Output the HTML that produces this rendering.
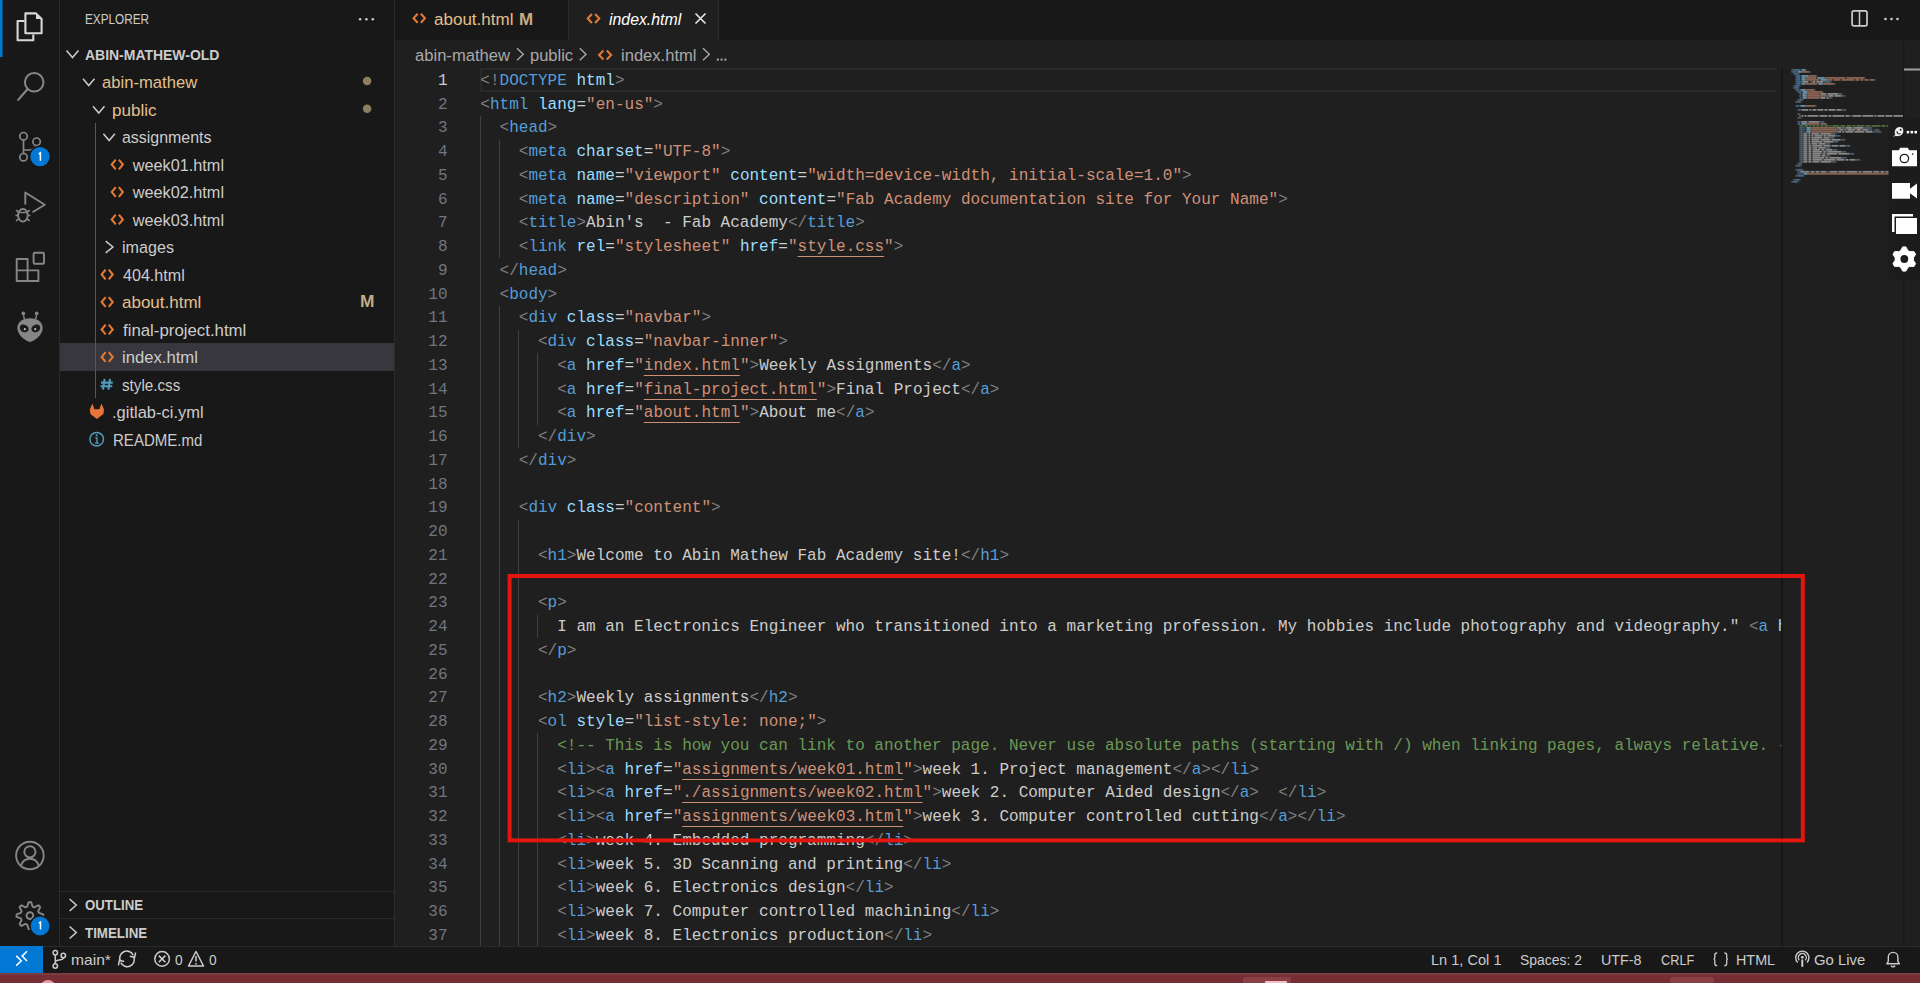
<!DOCTYPE html>
<html><head><meta charset="utf-8">
<style>
*{box-sizing:border-box}
html,body{margin:0;padding:0}
body{width:1920px;height:983px;overflow:hidden;background:#181818;position:relative;font-family:"Liberation Sans",sans-serif;color:#cccccc}
.abs{position:absolute}
#act{position:absolute;left:0;top:0;width:60px;height:946px;background:#181818;border-right:1px solid #2b2b2b}
#side{position:absolute;left:60px;top:0;width:335px;height:946px;background:#181818;border-right:1px solid #2b2b2b}
#tabs{position:absolute;left:395px;top:0;width:1525px;height:40.5px;background:#181818;border-bottom:1px solid #202020}
#editor{position:absolute;left:395px;top:41px;width:1525px;height:905px;background:#1f1f1f}
#status{position:absolute;left:0;top:946px;width:1920px;height:27.5px;background:#181818;border-top:1px solid #2b2b2b}
#task{position:absolute;left:0;top:973.4px;width:1920px;height:10px;background:#772d34}
.code{position:absolute;left:0;top:0;width:1782px;height:946px;overflow:hidden}
.ln{position:absolute;left:480.3px;transform:translateY(0px);height:23.75px;line-height:23.75px;white-space:pre;font-family:"Liberation Mono",monospace;font-size:16.03px;color:#cccccc}
.num{position:absolute;transform:translateY(0px);left:400px;width:47.5px;text-align:right;height:23.75px;line-height:23.75px;font-family:"Liberation Mono",monospace;font-size:16.03px;color:#6e7681}
.num.act{color:#cccccc}
.p{color:#808080}.t{color:#569cd6}.a{color:#9cdcfe}.s{color:#ce9178}.x{color:#cccccc}.c{color:#6a9955}
.s u{text-decoration:underline;text-decoration-color:#ce9178;text-underline-offset:4.5px;text-decoration-thickness:1px}
.guide{position:absolute;width:1px;background:#404040}
.ui{position:absolute;white-space:pre;font-size:16.25px;line-height:20px;transform-origin:0 50%}
</style></head><body>
<div id="act"></div>
<div id="side"></div>
<div id="tabs"></div>
<div id="editor"></div>
<div class="code">
<div class="abs" style="left:480px;top:68px;width:1297px;height:23.75px;border:2px solid #282828;border-right:none"></div>
<div class="num act" style="top:70.00px">1</div>
<div class="num" style="top:94.00px">2</div>
<div class="num" style="top:117.00px">3</div>
<div class="num" style="top:141.00px">4</div>
<div class="num" style="top:165.00px">5</div>
<div class="num" style="top:189.00px">6</div>
<div class="num" style="top:212.00px">7</div>
<div class="num" style="top:236.00px">8</div>
<div class="num" style="top:260.00px">9</div>
<div class="num" style="top:284.00px">10</div>
<div class="num" style="top:307.00px">11</div>
<div class="num" style="top:331.00px">12</div>
<div class="num" style="top:355.00px">13</div>
<div class="num" style="top:379.00px">14</div>
<div class="num" style="top:402.00px">15</div>
<div class="num" style="top:426.00px">16</div>
<div class="num" style="top:450.00px">17</div>
<div class="num" style="top:474.00px">18</div>
<div class="num" style="top:497.00px">19</div>
<div class="num" style="top:521.00px">20</div>
<div class="num" style="top:545.00px">21</div>
<div class="num" style="top:569.00px">22</div>
<div class="num" style="top:592.00px">23</div>
<div class="num" style="top:616.00px">24</div>
<div class="num" style="top:640.00px">25</div>
<div class="num" style="top:664.00px">26</div>
<div class="num" style="top:687.00px">27</div>
<div class="num" style="top:711.00px">28</div>
<div class="num" style="top:735.00px">29</div>
<div class="num" style="top:759.00px">30</div>
<div class="num" style="top:782.00px">31</div>
<div class="num" style="top:806.00px">32</div>
<div class="num" style="top:830.00px">33</div>
<div class="num" style="top:854.00px">34</div>
<div class="num" style="top:877.00px">35</div>
<div class="num" style="top:901.00px">36</div>
<div class="num" style="top:925.00px">37</div>
<div class="guide" style="left:479.7px;top:115.75px;height:831.25px"></div>
<div class="guide" style="left:498.9px;top:139.50px;height:118.75px"></div>
<div class="guide" style="left:498.9px;top:305.75px;height:641.25px"></div>
<div class="guide" style="left:518.2px;top:329.50px;height:118.75px"></div>
<div class="guide" style="left:518.2px;top:519.50px;height:427.50px"></div>
<div class="guide" style="left:537.4px;top:353.25px;height:71.25px"></div>
<div class="guide" style="left:537.4px;top:614.50px;height:23.75px"></div>
<div class="guide" style="left:537.4px;top:733.25px;height:213.75px"></div>
<div class="ln" style="top:70.00px"><span class="p">&lt;!</span><span class="t">DOCTYPE</span><span class="x"> </span><span class="a">html</span><span class="p">&gt;</span></div>
<div class="ln" style="top:94.00px"><span class="p">&lt;</span><span class="t">html</span><span class="x"> </span><span class="a">lang</span><span class="x">=</span><span class="s">&quot;en-us&quot;</span><span class="p">&gt;</span></div>
<div class="ln" style="top:117.00px"><span class="x">  </span><span class="p">&lt;</span><span class="t">head</span><span class="p">&gt;</span></div>
<div class="ln" style="top:141.00px"><span class="x">    </span><span class="p">&lt;</span><span class="t">meta</span><span class="x"> </span><span class="a">charset</span><span class="x">=</span><span class="s">&quot;UTF-8&quot;</span><span class="p">&gt;</span></div>
<div class="ln" style="top:165.00px"><span class="x">    </span><span class="p">&lt;</span><span class="t">meta</span><span class="x"> </span><span class="a">name</span><span class="x">=</span><span class="s">&quot;viewport&quot;</span><span class="x"> </span><span class="a">content</span><span class="x">=</span><span class="s">&quot;width=device-width, initial-scale=1.0&quot;</span><span class="p">&gt;</span></div>
<div class="ln" style="top:189.00px"><span class="x">    </span><span class="p">&lt;</span><span class="t">meta</span><span class="x"> </span><span class="a">name</span><span class="x">=</span><span class="s">&quot;description&quot;</span><span class="x"> </span><span class="a">content</span><span class="x">=</span><span class="s">&quot;Fab Academy documentation site for Your Name&quot;</span><span class="p">&gt;</span></div>
<div class="ln" style="top:212.00px"><span class="x">    </span><span class="p">&lt;</span><span class="t">title</span><span class="p">&gt;</span><span class="x">Abin&#x27;s  - Fab Academy</span><span class="p">&lt;/</span><span class="t">title</span><span class="p">&gt;</span></div>
<div class="ln" style="top:236.00px"><span class="x">    </span><span class="p">&lt;</span><span class="t">link</span><span class="x"> </span><span class="a">rel</span><span class="x">=</span><span class="s">&quot;stylesheet&quot;</span><span class="x"> </span><span class="a">href</span><span class="x">=</span><span class="s">"<u>style.css</u>"</span><span class="p">&gt;</span></div>
<div class="ln" style="top:260.00px"><span class="x">  </span><span class="p">&lt;/</span><span class="t">head</span><span class="p">&gt;</span></div>
<div class="ln" style="top:284.00px"><span class="x">  </span><span class="p">&lt;</span><span class="t">body</span><span class="p">&gt;</span></div>
<div class="ln" style="top:307.00px"><span class="x">    </span><span class="p">&lt;</span><span class="t">div</span><span class="x"> </span><span class="a">class</span><span class="x">=</span><span class="s">&quot;navbar&quot;</span><span class="p">&gt;</span></div>
<div class="ln" style="top:331.00px"><span class="x">      </span><span class="p">&lt;</span><span class="t">div</span><span class="x"> </span><span class="a">class</span><span class="x">=</span><span class="s">&quot;navbar-inner&quot;</span><span class="p">&gt;</span></div>
<div class="ln" style="top:355.00px"><span class="x">        </span><span class="p">&lt;</span><span class="t">a</span><span class="x"> </span><span class="a">href</span><span class="x">=</span><span class="s">"<u>index.html</u>"</span><span class="p">&gt;</span><span class="x">Weekly Assignments</span><span class="p">&lt;/</span><span class="t">a</span><span class="p">&gt;</span></div>
<div class="ln" style="top:379.00px"><span class="x">        </span><span class="p">&lt;</span><span class="t">a</span><span class="x"> </span><span class="a">href</span><span class="x">=</span><span class="s">"<u>final-project.html</u>"</span><span class="p">&gt;</span><span class="x">Final Project</span><span class="p">&lt;/</span><span class="t">a</span><span class="p">&gt;</span></div>
<div class="ln" style="top:402.00px"><span class="x">        </span><span class="p">&lt;</span><span class="t">a</span><span class="x"> </span><span class="a">href</span><span class="x">=</span><span class="s">"<u>about.html</u>"</span><span class="p">&gt;</span><span class="x">About me</span><span class="p">&lt;/</span><span class="t">a</span><span class="p">&gt;</span></div>
<div class="ln" style="top:426.00px"><span class="x">      </span><span class="p">&lt;/</span><span class="t">div</span><span class="p">&gt;</span></div>
<div class="ln" style="top:450.00px"><span class="x">    </span><span class="p">&lt;/</span><span class="t">div</span><span class="p">&gt;</span></div>
<div class="ln" style="top:474.00px"></div>
<div class="ln" style="top:497.00px"><span class="x">    </span><span class="p">&lt;</span><span class="t">div</span><span class="x"> </span><span class="a">class</span><span class="x">=</span><span class="s">&quot;content&quot;</span><span class="p">&gt;</span></div>
<div class="ln" style="top:521.00px"></div>
<div class="ln" style="top:545.00px"><span class="x">      </span><span class="p">&lt;</span><span class="t">h1</span><span class="p">&gt;</span><span class="x">Welcome to Abin Mathew Fab Academy site!</span><span class="p">&lt;/</span><span class="t">h1</span><span class="p">&gt;</span></div>
<div class="ln" style="top:569.00px"></div>
<div class="ln" style="top:592.00px"><span class="x">      </span><span class="p">&lt;</span><span class="t">p</span><span class="p">&gt;</span></div>
<div class="ln" style="top:616.00px"><span class="x">        I am an Electronics Engineer who transitioned into a marketing profession. My hobbies include photography and videography.&quot; </span><span class="p">&lt;</span><span class="t">a</span><span class="x"> </span><span class="a">href</span><span class="x">=</span><span class="s">&quot;#&quot;</span><span class="p">&gt;</span></div>
<div class="ln" style="top:640.00px"><span class="x">      </span><span class="p">&lt;/</span><span class="t">p</span><span class="p">&gt;</span></div>
<div class="ln" style="top:664.00px"></div>
<div class="ln" style="top:687.00px"><span class="x">      </span><span class="p">&lt;</span><span class="t">h2</span><span class="p">&gt;</span><span class="x">Weekly assignments</span><span class="p">&lt;/</span><span class="t">h2</span><span class="p">&gt;</span></div>
<div class="ln" style="top:711.00px"><span class="x">      </span><span class="p">&lt;</span><span class="t">ol</span><span class="x"> </span><span class="a">style</span><span class="x">=</span><span class="s">&quot;list-style: none;&quot;</span><span class="p">&gt;</span></div>
<div class="ln" style="top:735.00px"><span class="x">        </span><span class="c">&lt;!-- This is how you can link to another page. Never use absolute paths (starting with /) when linking pages, always relative. --&gt;</span></div>
<div class="ln" style="top:759.00px"><span class="x">        </span><span class="p">&lt;</span><span class="t">li</span><span class="p">&gt;</span><span class="p">&lt;</span><span class="t">a</span><span class="x"> </span><span class="a">href</span><span class="x">=</span><span class="s">"<u>assignments/week01.html</u>"</span><span class="p">&gt;</span><span class="x">week 1. Project management</span><span class="p">&lt;/</span><span class="t">a</span><span class="p">&gt;</span><span class="p">&lt;/</span><span class="t">li</span><span class="p">&gt;</span></div>
<div class="ln" style="top:782.00px"><span class="x">        </span><span class="p">&lt;</span><span class="t">li</span><span class="p">&gt;</span><span class="p">&lt;</span><span class="t">a</span><span class="x"> </span><span class="a">href</span><span class="x">=</span><span class="s">"<u>./assignments/week02.html</u>"</span><span class="p">&gt;</span><span class="x">week 2. Computer Aided design</span><span class="p">&lt;/</span><span class="t">a</span><span class="p">&gt;</span><span class="x">  </span><span class="p">&lt;/</span><span class="t">li</span><span class="p">&gt;</span></div>
<div class="ln" style="top:806.00px"><span class="x">        </span><span class="p">&lt;</span><span class="t">li</span><span class="p">&gt;</span><span class="p">&lt;</span><span class="t">a</span><span class="x"> </span><span class="a">href</span><span class="x">=</span><span class="s">"<u>assignments/week03.html</u>"</span><span class="p">&gt;</span><span class="x">week 3. Computer controlled cutting</span><span class="p">&lt;/</span><span class="t">a</span><span class="p">&gt;</span><span class="p">&lt;/</span><span class="t">li</span><span class="p">&gt;</span></div>
<div class="ln" style="top:830.00px"><span class="x">        </span><span class="p">&lt;</span><span class="t">li</span><span class="p">&gt;</span><span class="x">week 4. Embedded programming</span><span class="p">&lt;/</span><span class="t">li</span><span class="p">&gt;</span></div>
<div class="ln" style="top:854.00px"><span class="x">        </span><span class="p">&lt;</span><span class="t">li</span><span class="p">&gt;</span><span class="x">week 5. 3D Scanning and printing</span><span class="p">&lt;/</span><span class="t">li</span><span class="p">&gt;</span></div>
<div class="ln" style="top:877.00px"><span class="x">        </span><span class="p">&lt;</span><span class="t">li</span><span class="p">&gt;</span><span class="x">week 6. Electronics design</span><span class="p">&lt;/</span><span class="t">li</span><span class="p">&gt;</span></div>
<div class="ln" style="top:901.00px"><span class="x">        </span><span class="p">&lt;</span><span class="t">li</span><span class="p">&gt;</span><span class="x">week 7. Computer controlled machining</span><span class="p">&lt;/</span><span class="t">li</span><span class="p">&gt;</span></div>
<div class="ln" style="top:925.00px"><span class="x">        </span><span class="p">&lt;</span><span class="t">li</span><span class="p">&gt;</span><span class="x">week 8. Electronics production</span><span class="p">&lt;/</span><span class="t">li</span><span class="p">&gt;</span></div>
</div>
<div id="status"></div>
<div id="task"></div>
<svg class="abs" style="left:0;top:0" width="1920" height="983"><g opacity="0.6"><rect x="1791.4" y="69.0" width="2.0" height="1.8" fill="#808080"/><rect x="1793.4" y="69.0" width="7.0" height="1.8" fill="#569cd6"/><rect x="1801.4" y="69.0" width="4.0" height="1.8" fill="#9cdcfe"/><rect x="1805.4" y="69.0" width="1.0" height="1.8" fill="#808080"/><rect x="1791.4" y="71.0" width="1.0" height="1.8" fill="#808080"/><rect x="1792.4" y="71.0" width="4.0" height="1.8" fill="#569cd6"/><rect x="1797.4" y="71.0" width="4.0" height="1.8" fill="#9cdcfe"/><rect x="1801.4" y="71.0" width="1.0" height="1.8" fill="#cccccc"/><rect x="1802.4" y="71.0" width="7.0" height="1.8" fill="#ce9178"/><rect x="1809.4" y="71.0" width="1.0" height="1.8" fill="#808080"/><rect x="1793.4" y="73.0" width="1.0" height="1.8" fill="#808080"/><rect x="1794.4" y="73.0" width="4.0" height="1.8" fill="#569cd6"/><rect x="1798.4" y="73.0" width="1.0" height="1.8" fill="#808080"/><rect x="1795.4" y="75.0" width="1.0" height="1.8" fill="#808080"/><rect x="1796.4" y="75.0" width="4.0" height="1.8" fill="#569cd6"/><rect x="1801.4" y="75.0" width="7.0" height="1.8" fill="#9cdcfe"/><rect x="1808.4" y="75.0" width="1.0" height="1.8" fill="#cccccc"/><rect x="1809.4" y="75.0" width="7.0" height="1.8" fill="#ce9178"/><rect x="1816.4" y="75.0" width="1.0" height="1.8" fill="#808080"/><rect x="1795.4" y="77.0" width="1.0" height="1.8" fill="#808080"/><rect x="1796.4" y="77.0" width="4.0" height="1.8" fill="#569cd6"/><rect x="1801.4" y="77.0" width="4.0" height="1.8" fill="#9cdcfe"/><rect x="1805.4" y="77.0" width="1.0" height="1.8" fill="#cccccc"/><rect x="1806.4" y="77.0" width="10.0" height="1.8" fill="#ce9178"/><rect x="1817.4" y="77.0" width="7.0" height="1.8" fill="#9cdcfe"/><rect x="1824.4" y="77.0" width="1.0" height="1.8" fill="#cccccc"/><rect x="1825.4" y="77.0" width="20.0" height="1.8" fill="#ce9178"/><rect x="1846.4" y="77.0" width="18.0" height="1.8" fill="#ce9178"/><rect x="1864.4" y="77.0" width="1.0" height="1.8" fill="#808080"/><rect x="1795.4" y="79.0" width="1.0" height="1.8" fill="#808080"/><rect x="1796.4" y="79.0" width="4.0" height="1.8" fill="#569cd6"/><rect x="1801.4" y="79.0" width="4.0" height="1.8" fill="#9cdcfe"/><rect x="1805.4" y="79.0" width="1.0" height="1.8" fill="#cccccc"/><rect x="1806.4" y="79.0" width="13.0" height="1.8" fill="#ce9178"/><rect x="1820.4" y="79.0" width="7.0" height="1.8" fill="#9cdcfe"/><rect x="1827.4" y="79.0" width="1.0" height="1.8" fill="#cccccc"/><rect x="1828.4" y="79.0" width="4.0" height="1.8" fill="#ce9178"/><rect x="1833.4" y="79.0" width="7.0" height="1.8" fill="#ce9178"/><rect x="1841.4" y="79.0" width="13.0" height="1.8" fill="#ce9178"/><rect x="1855.4" y="79.0" width="4.0" height="1.8" fill="#ce9178"/><rect x="1860.4" y="79.0" width="3.0" height="1.8" fill="#ce9178"/><rect x="1864.4" y="79.0" width="4.0" height="1.8" fill="#ce9178"/><rect x="1869.4" y="79.0" width="5.0" height="1.8" fill="#ce9178"/><rect x="1874.4" y="79.0" width="1.0" height="1.8" fill="#808080"/><rect x="1795.4" y="81.0" width="1.0" height="1.8" fill="#808080"/><rect x="1796.4" y="81.0" width="5.0" height="1.8" fill="#569cd6"/><rect x="1801.4" y="81.0" width="1.0" height="1.8" fill="#808080"/><rect x="1802.4" y="81.0" width="6.0" height="1.8" fill="#cccccc"/><rect x="1810.4" y="81.0" width="1.0" height="1.8" fill="#cccccc"/><rect x="1812.4" y="81.0" width="3.0" height="1.8" fill="#cccccc"/><rect x="1816.4" y="81.0" width="7.0" height="1.8" fill="#cccccc"/><rect x="1823.4" y="81.0" width="2.0" height="1.8" fill="#808080"/><rect x="1825.4" y="81.0" width="5.0" height="1.8" fill="#569cd6"/><rect x="1830.4" y="81.0" width="1.0" height="1.8" fill="#808080"/><rect x="1795.4" y="83.0" width="1.0" height="1.8" fill="#808080"/><rect x="1796.4" y="83.0" width="4.0" height="1.8" fill="#569cd6"/><rect x="1801.4" y="83.0" width="3.0" height="1.8" fill="#9cdcfe"/><rect x="1804.4" y="83.0" width="1.0" height="1.8" fill="#cccccc"/><rect x="1805.4" y="83.0" width="12.0" height="1.8" fill="#ce9178"/><rect x="1818.4" y="83.0" width="4.0" height="1.8" fill="#9cdcfe"/><rect x="1822.4" y="83.0" width="1.0" height="1.8" fill="#cccccc"/><rect x="1823.4" y="83.0" width="11.0" height="1.8" fill="#ce9178"/><rect x="1834.4" y="83.0" width="1.0" height="1.8" fill="#808080"/><rect x="1793.4" y="85.0" width="2.0" height="1.8" fill="#808080"/><rect x="1795.4" y="85.0" width="4.0" height="1.8" fill="#569cd6"/><rect x="1799.4" y="85.0" width="1.0" height="1.8" fill="#808080"/><rect x="1793.4" y="87.0" width="1.0" height="1.8" fill="#808080"/><rect x="1794.4" y="87.0" width="4.0" height="1.8" fill="#569cd6"/><rect x="1798.4" y="87.0" width="1.0" height="1.8" fill="#808080"/><rect x="1795.4" y="89.0" width="1.0" height="1.8" fill="#808080"/><rect x="1796.4" y="89.0" width="3.0" height="1.8" fill="#569cd6"/><rect x="1800.4" y="89.0" width="5.0" height="1.8" fill="#9cdcfe"/><rect x="1805.4" y="89.0" width="1.0" height="1.8" fill="#cccccc"/><rect x="1806.4" y="89.0" width="8.0" height="1.8" fill="#ce9178"/><rect x="1814.4" y="89.0" width="1.0" height="1.8" fill="#808080"/><rect x="1797.4" y="91.0" width="1.0" height="1.8" fill="#808080"/><rect x="1798.4" y="91.0" width="3.0" height="1.8" fill="#569cd6"/><rect x="1802.4" y="91.0" width="5.0" height="1.8" fill="#9cdcfe"/><rect x="1807.4" y="91.0" width="1.0" height="1.8" fill="#cccccc"/><rect x="1808.4" y="91.0" width="14.0" height="1.8" fill="#ce9178"/><rect x="1822.4" y="91.0" width="1.0" height="1.8" fill="#808080"/><rect x="1799.4" y="93.0" width="1.0" height="1.8" fill="#808080"/><rect x="1800.4" y="93.0" width="1.0" height="1.8" fill="#569cd6"/><rect x="1802.4" y="93.0" width="4.0" height="1.8" fill="#9cdcfe"/><rect x="1806.4" y="93.0" width="1.0" height="1.8" fill="#cccccc"/><rect x="1807.4" y="93.0" width="12.0" height="1.8" fill="#ce9178"/><rect x="1819.4" y="93.0" width="1.0" height="1.8" fill="#808080"/><rect x="1820.4" y="93.0" width="6.0" height="1.8" fill="#cccccc"/><rect x="1827.4" y="93.0" width="11.0" height="1.8" fill="#cccccc"/><rect x="1838.4" y="93.0" width="2.0" height="1.8" fill="#808080"/><rect x="1840.4" y="93.0" width="1.0" height="1.8" fill="#569cd6"/><rect x="1841.4" y="93.0" width="1.0" height="1.8" fill="#808080"/><rect x="1799.4" y="95.0" width="1.0" height="1.8" fill="#808080"/><rect x="1800.4" y="95.0" width="1.0" height="1.8" fill="#569cd6"/><rect x="1802.4" y="95.0" width="4.0" height="1.8" fill="#9cdcfe"/><rect x="1806.4" y="95.0" width="1.0" height="1.8" fill="#cccccc"/><rect x="1807.4" y="95.0" width="20.0" height="1.8" fill="#ce9178"/><rect x="1827.4" y="95.0" width="1.0" height="1.8" fill="#808080"/><rect x="1828.4" y="95.0" width="5.0" height="1.8" fill="#cccccc"/><rect x="1834.4" y="95.0" width="7.0" height="1.8" fill="#cccccc"/><rect x="1841.4" y="95.0" width="2.0" height="1.8" fill="#808080"/><rect x="1843.4" y="95.0" width="1.0" height="1.8" fill="#569cd6"/><rect x="1844.4" y="95.0" width="1.0" height="1.8" fill="#808080"/><rect x="1799.4" y="97.0" width="1.0" height="1.8" fill="#808080"/><rect x="1800.4" y="97.0" width="1.0" height="1.8" fill="#569cd6"/><rect x="1802.4" y="97.0" width="4.0" height="1.8" fill="#9cdcfe"/><rect x="1806.4" y="97.0" width="1.0" height="1.8" fill="#cccccc"/><rect x="1807.4" y="97.0" width="12.0" height="1.8" fill="#ce9178"/><rect x="1819.4" y="97.0" width="1.0" height="1.8" fill="#808080"/><rect x="1820.4" y="97.0" width="5.0" height="1.8" fill="#cccccc"/><rect x="1826.4" y="97.0" width="2.0" height="1.8" fill="#cccccc"/><rect x="1828.4" y="97.0" width="2.0" height="1.8" fill="#808080"/><rect x="1830.4" y="97.0" width="1.0" height="1.8" fill="#569cd6"/><rect x="1831.4" y="97.0" width="1.0" height="1.8" fill="#808080"/><rect x="1797.4" y="99.0" width="2.0" height="1.8" fill="#808080"/><rect x="1799.4" y="99.0" width="3.0" height="1.8" fill="#569cd6"/><rect x="1802.4" y="99.0" width="1.0" height="1.8" fill="#808080"/><rect x="1795.4" y="101.0" width="2.0" height="1.8" fill="#808080"/><rect x="1797.4" y="101.0" width="3.0" height="1.8" fill="#569cd6"/><rect x="1800.4" y="101.0" width="1.0" height="1.8" fill="#808080"/><rect x="1795.4" y="105.0" width="1.0" height="1.8" fill="#808080"/><rect x="1796.4" y="105.0" width="3.0" height="1.8" fill="#569cd6"/><rect x="1800.4" y="105.0" width="5.0" height="1.8" fill="#9cdcfe"/><rect x="1805.4" y="105.0" width="1.0" height="1.8" fill="#cccccc"/><rect x="1806.4" y="105.0" width="9.0" height="1.8" fill="#ce9178"/><rect x="1815.4" y="105.0" width="1.0" height="1.8" fill="#808080"/><rect x="1797.4" y="109.0" width="1.0" height="1.8" fill="#808080"/><rect x="1798.4" y="109.0" width="2.0" height="1.8" fill="#569cd6"/><rect x="1800.4" y="109.0" width="1.0" height="1.8" fill="#808080"/><rect x="1801.4" y="109.0" width="7.0" height="1.8" fill="#cccccc"/><rect x="1809.4" y="109.0" width="2.0" height="1.8" fill="#cccccc"/><rect x="1812.4" y="109.0" width="4.0" height="1.8" fill="#cccccc"/><rect x="1817.4" y="109.0" width="6.0" height="1.8" fill="#cccccc"/><rect x="1824.4" y="109.0" width="3.0" height="1.8" fill="#cccccc"/><rect x="1828.4" y="109.0" width="7.0" height="1.8" fill="#cccccc"/><rect x="1836.4" y="109.0" width="5.0" height="1.8" fill="#cccccc"/><rect x="1841.4" y="109.0" width="2.0" height="1.8" fill="#808080"/><rect x="1843.4" y="109.0" width="2.0" height="1.8" fill="#569cd6"/><rect x="1845.4" y="109.0" width="1.0" height="1.8" fill="#808080"/><rect x="1797.4" y="113.0" width="1.0" height="1.8" fill="#808080"/><rect x="1798.4" y="113.0" width="1.0" height="1.8" fill="#569cd6"/><rect x="1799.4" y="113.0" width="1.0" height="1.8" fill="#808080"/><rect x="1799.4" y="115.0" width="1.0" height="1.8" fill="#cccccc"/><rect x="1801.4" y="115.0" width="2.0" height="1.8" fill="#cccccc"/><rect x="1804.4" y="115.0" width="2.0" height="1.8" fill="#cccccc"/><rect x="1807.4" y="115.0" width="11.0" height="1.8" fill="#cccccc"/><rect x="1819.4" y="115.0" width="8.0" height="1.8" fill="#cccccc"/><rect x="1828.4" y="115.0" width="3.0" height="1.8" fill="#cccccc"/><rect x="1832.4" y="115.0" width="12.0" height="1.8" fill="#cccccc"/><rect x="1845.4" y="115.0" width="4.0" height="1.8" fill="#cccccc"/><rect x="1850.4" y="115.0" width="1.0" height="1.8" fill="#cccccc"/><rect x="1852.4" y="115.0" width="9.0" height="1.8" fill="#cccccc"/><rect x="1862.4" y="115.0" width="11.0" height="1.8" fill="#cccccc"/><rect x="1874.4" y="115.0" width="2.0" height="1.8" fill="#cccccc"/><rect x="1877.4" y="115.0" width="7.0" height="1.8" fill="#cccccc"/><rect x="1885.4" y="115.0" width="7.0" height="1.8" fill="#cccccc"/><rect x="1893.4" y="115.0" width="9.6" height="1.8" fill="#cccccc"/><rect x="1797.4" y="117.0" width="2.0" height="1.8" fill="#808080"/><rect x="1799.4" y="117.0" width="1.0" height="1.8" fill="#569cd6"/><rect x="1800.4" y="117.0" width="1.0" height="1.8" fill="#808080"/><rect x="1797.4" y="121.0" width="1.0" height="1.8" fill="#808080"/><rect x="1798.4" y="121.0" width="2.0" height="1.8" fill="#569cd6"/><rect x="1800.4" y="121.0" width="1.0" height="1.8" fill="#808080"/><rect x="1801.4" y="121.0" width="6.0" height="1.8" fill="#cccccc"/><rect x="1808.4" y="121.0" width="11.0" height="1.8" fill="#cccccc"/><rect x="1819.4" y="121.0" width="2.0" height="1.8" fill="#808080"/><rect x="1821.4" y="121.0" width="2.0" height="1.8" fill="#569cd6"/><rect x="1823.4" y="121.0" width="1.0" height="1.8" fill="#808080"/><rect x="1797.4" y="123.0" width="1.0" height="1.8" fill="#808080"/><rect x="1798.4" y="123.0" width="2.0" height="1.8" fill="#569cd6"/><rect x="1801.4" y="123.0" width="5.0" height="1.8" fill="#9cdcfe"/><rect x="1806.4" y="123.0" width="1.0" height="1.8" fill="#cccccc"/><rect x="1807.4" y="123.0" width="12.0" height="1.8" fill="#ce9178"/><rect x="1820.4" y="123.0" width="6.0" height="1.8" fill="#ce9178"/><rect x="1826.4" y="123.0" width="1.0" height="1.8" fill="#808080"/><rect x="1799.4" y="125.0" width="4.0" height="1.8" fill="#6a9955"/><rect x="1804.4" y="125.0" width="4.0" height="1.8" fill="#6a9955"/><rect x="1809.4" y="125.0" width="2.0" height="1.8" fill="#6a9955"/><rect x="1812.4" y="125.0" width="3.0" height="1.8" fill="#6a9955"/><rect x="1816.4" y="125.0" width="3.0" height="1.8" fill="#6a9955"/><rect x="1820.4" y="125.0" width="3.0" height="1.8" fill="#6a9955"/><rect x="1824.4" y="125.0" width="4.0" height="1.8" fill="#6a9955"/><rect x="1829.4" y="125.0" width="2.0" height="1.8" fill="#6a9955"/><rect x="1832.4" y="125.0" width="7.0" height="1.8" fill="#6a9955"/><rect x="1840.4" y="125.0" width="5.0" height="1.8" fill="#6a9955"/><rect x="1846.4" y="125.0" width="5.0" height="1.8" fill="#6a9955"/><rect x="1852.4" y="125.0" width="3.0" height="1.8" fill="#6a9955"/><rect x="1856.4" y="125.0" width="8.0" height="1.8" fill="#6a9955"/><rect x="1865.4" y="125.0" width="5.0" height="1.8" fill="#6a9955"/><rect x="1871.4" y="125.0" width="9.0" height="1.8" fill="#6a9955"/><rect x="1881.4" y="125.0" width="4.0" height="1.8" fill="#6a9955"/><rect x="1886.4" y="125.0" width="2.0" height="1.8" fill="#6a9955"/><rect x="1889.4" y="125.0" width="4.0" height="1.8" fill="#6a9955"/><rect x="1894.4" y="125.0" width="7.0" height="1.8" fill="#6a9955"/><rect x="1902.4" y="125.0" width="0.6" height="1.8" fill="#6a9955"/><rect x="1799.4" y="127.0" width="1.0" height="1.8" fill="#808080"/><rect x="1800.4" y="127.0" width="2.0" height="1.8" fill="#569cd6"/><rect x="1802.4" y="127.0" width="1.0" height="1.8" fill="#808080"/><rect x="1803.4" y="127.0" width="1.0" height="1.8" fill="#808080"/><rect x="1804.4" y="127.0" width="1.0" height="1.8" fill="#569cd6"/><rect x="1806.4" y="127.0" width="4.0" height="1.8" fill="#9cdcfe"/><rect x="1810.4" y="127.0" width="1.0" height="1.8" fill="#cccccc"/><rect x="1811.4" y="127.0" width="25.0" height="1.8" fill="#ce9178"/><rect x="1836.4" y="127.0" width="1.0" height="1.8" fill="#808080"/><rect x="1837.4" y="127.0" width="4.0" height="1.8" fill="#cccccc"/><rect x="1842.4" y="127.0" width="2.0" height="1.8" fill="#cccccc"/><rect x="1845.4" y="127.0" width="7.0" height="1.8" fill="#cccccc"/><rect x="1853.4" y="127.0" width="10.0" height="1.8" fill="#cccccc"/><rect x="1863.4" y="127.0" width="2.0" height="1.8" fill="#808080"/><rect x="1865.4" y="127.0" width="1.0" height="1.8" fill="#569cd6"/><rect x="1866.4" y="127.0" width="1.0" height="1.8" fill="#808080"/><rect x="1867.4" y="127.0" width="2.0" height="1.8" fill="#808080"/><rect x="1869.4" y="127.0" width="2.0" height="1.8" fill="#569cd6"/><rect x="1871.4" y="127.0" width="1.0" height="1.8" fill="#808080"/><rect x="1799.4" y="128.9" width="1.0" height="1.8" fill="#808080"/><rect x="1800.4" y="128.9" width="2.0" height="1.8" fill="#569cd6"/><rect x="1802.4" y="128.9" width="1.0" height="1.8" fill="#808080"/><rect x="1803.4" y="128.9" width="1.0" height="1.8" fill="#808080"/><rect x="1804.4" y="128.9" width="1.0" height="1.8" fill="#569cd6"/><rect x="1806.4" y="128.9" width="4.0" height="1.8" fill="#9cdcfe"/><rect x="1810.4" y="128.9" width="1.0" height="1.8" fill="#cccccc"/><rect x="1811.4" y="128.9" width="27.0" height="1.8" fill="#ce9178"/><rect x="1838.4" y="128.9" width="1.0" height="1.8" fill="#808080"/><rect x="1839.4" y="128.9" width="4.0" height="1.8" fill="#cccccc"/><rect x="1844.4" y="128.9" width="2.0" height="1.8" fill="#cccccc"/><rect x="1847.4" y="128.9" width="8.0" height="1.8" fill="#cccccc"/><rect x="1856.4" y="128.9" width="5.0" height="1.8" fill="#cccccc"/><rect x="1862.4" y="128.9" width="6.0" height="1.8" fill="#cccccc"/><rect x="1868.4" y="128.9" width="2.0" height="1.8" fill="#808080"/><rect x="1870.4" y="128.9" width="1.0" height="1.8" fill="#569cd6"/><rect x="1871.4" y="128.9" width="1.0" height="1.8" fill="#808080"/><rect x="1874.4" y="128.9" width="2.0" height="1.8" fill="#808080"/><rect x="1876.4" y="128.9" width="2.0" height="1.8" fill="#569cd6"/><rect x="1878.4" y="128.9" width="1.0" height="1.8" fill="#808080"/><rect x="1799.4" y="130.9" width="1.0" height="1.8" fill="#808080"/><rect x="1800.4" y="130.9" width="2.0" height="1.8" fill="#569cd6"/><rect x="1802.4" y="130.9" width="1.0" height="1.8" fill="#808080"/><rect x="1803.4" y="130.9" width="1.0" height="1.8" fill="#808080"/><rect x="1804.4" y="130.9" width="1.0" height="1.8" fill="#569cd6"/><rect x="1806.4" y="130.9" width="4.0" height="1.8" fill="#9cdcfe"/><rect x="1810.4" y="130.9" width="1.0" height="1.8" fill="#cccccc"/><rect x="1811.4" y="130.9" width="25.0" height="1.8" fill="#ce9178"/><rect x="1836.4" y="130.9" width="1.0" height="1.8" fill="#808080"/><rect x="1837.4" y="130.9" width="4.0" height="1.8" fill="#cccccc"/><rect x="1842.4" y="130.9" width="2.0" height="1.8" fill="#cccccc"/><rect x="1845.4" y="130.9" width="8.0" height="1.8" fill="#cccccc"/><rect x="1854.4" y="130.9" width="10.0" height="1.8" fill="#cccccc"/><rect x="1865.4" y="130.9" width="7.0" height="1.8" fill="#cccccc"/><rect x="1872.4" y="130.9" width="2.0" height="1.8" fill="#808080"/><rect x="1874.4" y="130.9" width="1.0" height="1.8" fill="#569cd6"/><rect x="1875.4" y="130.9" width="1.0" height="1.8" fill="#808080"/><rect x="1876.4" y="130.9" width="2.0" height="1.8" fill="#808080"/><rect x="1878.4" y="130.9" width="2.0" height="1.8" fill="#569cd6"/><rect x="1880.4" y="130.9" width="1.0" height="1.8" fill="#808080"/><rect x="1799.4" y="132.9" width="1.0" height="1.8" fill="#808080"/><rect x="1800.4" y="132.9" width="2.0" height="1.8" fill="#569cd6"/><rect x="1802.4" y="132.9" width="1.0" height="1.8" fill="#808080"/><rect x="1803.4" y="132.9" width="4.0" height="1.8" fill="#cccccc"/><rect x="1808.4" y="132.9" width="2.0" height="1.8" fill="#cccccc"/><rect x="1811.4" y="132.9" width="8.0" height="1.8" fill="#cccccc"/><rect x="1820.4" y="132.9" width="11.0" height="1.8" fill="#cccccc"/><rect x="1831.4" y="132.9" width="2.0" height="1.8" fill="#808080"/><rect x="1833.4" y="132.9" width="2.0" height="1.8" fill="#569cd6"/><rect x="1835.4" y="132.9" width="1.0" height="1.8" fill="#808080"/><rect x="1799.4" y="134.9" width="1.0" height="1.8" fill="#808080"/><rect x="1800.4" y="134.9" width="2.0" height="1.8" fill="#569cd6"/><rect x="1802.4" y="134.9" width="1.0" height="1.8" fill="#808080"/><rect x="1803.4" y="134.9" width="4.0" height="1.8" fill="#cccccc"/><rect x="1808.4" y="134.9" width="2.0" height="1.8" fill="#cccccc"/><rect x="1811.4" y="134.9" width="2.0" height="1.8" fill="#cccccc"/><rect x="1814.4" y="134.9" width="8.0" height="1.8" fill="#cccccc"/><rect x="1823.4" y="134.9" width="3.0" height="1.8" fill="#cccccc"/><rect x="1827.4" y="134.9" width="8.0" height="1.8" fill="#cccccc"/><rect x="1835.4" y="134.9" width="2.0" height="1.8" fill="#808080"/><rect x="1837.4" y="134.9" width="2.0" height="1.8" fill="#569cd6"/><rect x="1839.4" y="134.9" width="1.0" height="1.8" fill="#808080"/><rect x="1799.4" y="136.9" width="1.0" height="1.8" fill="#808080"/><rect x="1800.4" y="136.9" width="2.0" height="1.8" fill="#569cd6"/><rect x="1802.4" y="136.9" width="1.0" height="1.8" fill="#808080"/><rect x="1803.4" y="136.9" width="4.0" height="1.8" fill="#cccccc"/><rect x="1808.4" y="136.9" width="2.0" height="1.8" fill="#cccccc"/><rect x="1811.4" y="136.9" width="11.0" height="1.8" fill="#cccccc"/><rect x="1823.4" y="136.9" width="6.0" height="1.8" fill="#cccccc"/><rect x="1829.4" y="136.9" width="2.0" height="1.8" fill="#808080"/><rect x="1831.4" y="136.9" width="2.0" height="1.8" fill="#569cd6"/><rect x="1833.4" y="136.9" width="1.0" height="1.8" fill="#808080"/><rect x="1799.4" y="138.9" width="1.0" height="1.8" fill="#808080"/><rect x="1800.4" y="138.9" width="2.0" height="1.8" fill="#569cd6"/><rect x="1802.4" y="138.9" width="1.0" height="1.8" fill="#808080"/><rect x="1803.4" y="138.9" width="4.0" height="1.8" fill="#cccccc"/><rect x="1808.4" y="138.9" width="2.0" height="1.8" fill="#cccccc"/><rect x="1811.4" y="138.9" width="8.0" height="1.8" fill="#cccccc"/><rect x="1820.4" y="138.9" width="10.0" height="1.8" fill="#cccccc"/><rect x="1831.4" y="138.9" width="9.0" height="1.8" fill="#cccccc"/><rect x="1840.4" y="138.9" width="2.0" height="1.8" fill="#808080"/><rect x="1842.4" y="138.9" width="2.0" height="1.8" fill="#569cd6"/><rect x="1844.4" y="138.9" width="1.0" height="1.8" fill="#808080"/><rect x="1799.4" y="140.9" width="1.0" height="1.8" fill="#808080"/><rect x="1800.4" y="140.9" width="2.0" height="1.8" fill="#569cd6"/><rect x="1802.4" y="140.9" width="1.0" height="1.8" fill="#808080"/><rect x="1803.4" y="140.9" width="4.0" height="1.8" fill="#cccccc"/><rect x="1808.4" y="140.9" width="2.0" height="1.8" fill="#cccccc"/><rect x="1811.4" y="140.9" width="11.0" height="1.8" fill="#cccccc"/><rect x="1823.4" y="140.9" width="10.0" height="1.8" fill="#cccccc"/><rect x="1833.4" y="140.9" width="2.0" height="1.8" fill="#808080"/><rect x="1835.4" y="140.9" width="2.0" height="1.8" fill="#569cd6"/><rect x="1837.4" y="140.9" width="1.0" height="1.8" fill="#808080"/><rect x="1799.4" y="142.9" width="1.0" height="1.8" fill="#808080"/><rect x="1800.4" y="142.9" width="2.0" height="1.8" fill="#569cd6"/><rect x="1802.4" y="142.9" width="1.0" height="1.8" fill="#808080"/><rect x="1803.4" y="142.9" width="4.0" height="1.8" fill="#cccccc"/><rect x="1808.4" y="142.9" width="2.0" height="1.8" fill="#cccccc"/><rect x="1811.4" y="142.9" width="6.0" height="1.8" fill="#cccccc"/><rect x="1818.4" y="142.9" width="7.0" height="1.8" fill="#cccccc"/><rect x="1825.4" y="142.9" width="2.0" height="1.8" fill="#808080"/><rect x="1827.4" y="142.9" width="2.0" height="1.8" fill="#569cd6"/><rect x="1829.4" y="142.9" width="1.0" height="1.8" fill="#808080"/><rect x="1799.4" y="144.9" width="1.0" height="1.8" fill="#808080"/><rect x="1800.4" y="144.9" width="2.0" height="1.8" fill="#569cd6"/><rect x="1802.4" y="144.9" width="1.0" height="1.8" fill="#808080"/><rect x="1803.4" y="144.9" width="4.0" height="1.8" fill="#cccccc"/><rect x="1808.4" y="144.9" width="3.0" height="1.8" fill="#cccccc"/><rect x="1812.4" y="144.9" width="10.0" height="1.8" fill="#cccccc"/><rect x="1823.4" y="144.9" width="7.0" height="1.8" fill="#cccccc"/><rect x="1831.4" y="144.9" width="7.0" height="1.8" fill="#cccccc"/><rect x="1839.4" y="144.9" width="6.0" height="1.8" fill="#cccccc"/><rect x="1845.4" y="144.9" width="2.0" height="1.8" fill="#808080"/><rect x="1847.4" y="144.9" width="2.0" height="1.8" fill="#569cd6"/><rect x="1849.4" y="144.9" width="1.0" height="1.8" fill="#808080"/><rect x="1799.4" y="146.9" width="1.0" height="1.8" fill="#808080"/><rect x="1800.4" y="146.9" width="2.0" height="1.8" fill="#569cd6"/><rect x="1802.4" y="146.9" width="1.0" height="1.8" fill="#808080"/><rect x="1803.4" y="146.9" width="4.0" height="1.8" fill="#cccccc"/><rect x="1808.4" y="146.9" width="3.0" height="1.8" fill="#cccccc"/><rect x="1812.4" y="146.9" width="5.0" height="1.8" fill="#cccccc"/><rect x="1818.4" y="146.9" width="7.0" height="1.8" fill="#cccccc"/><rect x="1825.4" y="146.9" width="2.0" height="1.8" fill="#808080"/><rect x="1827.4" y="146.9" width="2.0" height="1.8" fill="#569cd6"/><rect x="1829.4" y="146.9" width="1.0" height="1.8" fill="#808080"/><rect x="1799.4" y="148.9" width="1.0" height="1.8" fill="#808080"/><rect x="1800.4" y="148.9" width="2.0" height="1.8" fill="#569cd6"/><rect x="1802.4" y="148.9" width="1.0" height="1.8" fill="#808080"/><rect x="1803.4" y="148.9" width="4.0" height="1.8" fill="#cccccc"/><rect x="1808.4" y="148.9" width="3.0" height="1.8" fill="#cccccc"/><rect x="1812.4" y="148.9" width="8.0" height="1.8" fill="#cccccc"/><rect x="1821.4" y="148.9" width="3.0" height="1.8" fill="#cccccc"/><rect x="1825.4" y="148.9" width="7.0" height="1.8" fill="#cccccc"/><rect x="1832.4" y="148.9" width="2.0" height="1.8" fill="#808080"/><rect x="1834.4" y="148.9" width="2.0" height="1.8" fill="#569cd6"/><rect x="1836.4" y="148.9" width="1.0" height="1.8" fill="#808080"/><rect x="1799.4" y="150.9" width="1.0" height="1.8" fill="#808080"/><rect x="1800.4" y="150.9" width="2.0" height="1.8" fill="#569cd6"/><rect x="1802.4" y="150.9" width="1.0" height="1.8" fill="#808080"/><rect x="1803.4" y="150.9" width="4.0" height="1.8" fill="#cccccc"/><rect x="1808.4" y="150.9" width="3.0" height="1.8" fill="#cccccc"/><rect x="1812.4" y="150.9" width="10.0" height="1.8" fill="#cccccc"/><rect x="1823.4" y="150.9" width="3.0" height="1.8" fill="#cccccc"/><rect x="1827.4" y="150.9" width="14.0" height="1.8" fill="#cccccc"/><rect x="1841.4" y="150.9" width="2.0" height="1.8" fill="#808080"/><rect x="1843.4" y="150.9" width="2.0" height="1.8" fill="#569cd6"/><rect x="1845.4" y="150.9" width="1.0" height="1.8" fill="#808080"/><rect x="1799.4" y="152.9" width="1.0" height="1.8" fill="#808080"/><rect x="1800.4" y="152.9" width="2.0" height="1.8" fill="#569cd6"/><rect x="1802.4" y="152.9" width="1.0" height="1.8" fill="#808080"/><rect x="1803.4" y="152.9" width="4.0" height="1.8" fill="#cccccc"/><rect x="1808.4" y="152.9" width="3.0" height="1.8" fill="#cccccc"/><rect x="1812.4" y="152.9" width="9.0" height="1.8" fill="#cccccc"/><rect x="1822.4" y="152.9" width="3.0" height="1.8" fill="#cccccc"/><rect x="1826.4" y="152.9" width="11.0" height="1.8" fill="#cccccc"/><rect x="1838.4" y="152.9" width="11.0" height="1.8" fill="#cccccc"/><rect x="1849.4" y="152.9" width="2.0" height="1.8" fill="#808080"/><rect x="1851.4" y="152.9" width="2.0" height="1.8" fill="#569cd6"/><rect x="1853.4" y="152.9" width="1.0" height="1.8" fill="#808080"/><rect x="1799.4" y="154.9" width="1.0" height="1.8" fill="#808080"/><rect x="1800.4" y="154.9" width="2.0" height="1.8" fill="#569cd6"/><rect x="1802.4" y="154.9" width="1.0" height="1.8" fill="#808080"/><rect x="1803.4" y="154.9" width="4.0" height="1.8" fill="#cccccc"/><rect x="1808.4" y="154.9" width="3.0" height="1.8" fill="#cccccc"/><rect x="1812.4" y="154.9" width="8.0" height="1.8" fill="#cccccc"/><rect x="1821.4" y="154.9" width="4.0" height="1.8" fill="#cccccc"/><rect x="1825.4" y="154.9" width="2.0" height="1.8" fill="#808080"/><rect x="1827.4" y="154.9" width="2.0" height="1.8" fill="#569cd6"/><rect x="1829.4" y="154.9" width="1.0" height="1.8" fill="#808080"/><rect x="1799.4" y="156.9" width="1.0" height="1.8" fill="#808080"/><rect x="1800.4" y="156.9" width="2.0" height="1.8" fill="#569cd6"/><rect x="1802.4" y="156.9" width="1.0" height="1.8" fill="#808080"/><rect x="1803.4" y="156.9" width="4.0" height="1.8" fill="#cccccc"/><rect x="1808.4" y="156.9" width="3.0" height="1.8" fill="#cccccc"/><rect x="1812.4" y="156.9" width="12.0" height="1.8" fill="#cccccc"/><rect x="1825.4" y="156.9" width="3.0" height="1.8" fill="#cccccc"/><rect x="1829.4" y="156.9" width="12.0" height="1.8" fill="#cccccc"/><rect x="1841.4" y="156.9" width="2.0" height="1.8" fill="#808080"/><rect x="1843.4" y="156.9" width="2.0" height="1.8" fill="#569cd6"/><rect x="1845.4" y="156.9" width="1.0" height="1.8" fill="#808080"/><rect x="1799.4" y="158.9" width="1.0" height="1.8" fill="#808080"/><rect x="1800.4" y="158.9" width="2.0" height="1.8" fill="#569cd6"/><rect x="1802.4" y="158.9" width="1.0" height="1.8" fill="#808080"/><rect x="1803.4" y="158.9" width="4.0" height="1.8" fill="#cccccc"/><rect x="1808.4" y="158.9" width="3.0" height="1.8" fill="#cccccc"/><rect x="1812.4" y="158.9" width="10.0" height="1.8" fill="#cccccc"/><rect x="1823.4" y="158.9" width="12.0" height="1.8" fill="#cccccc"/><rect x="1836.4" y="158.9" width="8.0" height="1.8" fill="#cccccc"/><rect x="1845.4" y="158.9" width="3.0" height="1.8" fill="#cccccc"/><rect x="1849.4" y="158.9" width="6.0" height="1.8" fill="#cccccc"/><rect x="1855.4" y="158.9" width="2.0" height="1.8" fill="#808080"/><rect x="1857.4" y="158.9" width="2.0" height="1.8" fill="#569cd6"/><rect x="1859.4" y="158.9" width="1.0" height="1.8" fill="#808080"/><rect x="1799.4" y="160.9" width="1.0" height="1.8" fill="#808080"/><rect x="1800.4" y="160.9" width="2.0" height="1.8" fill="#569cd6"/><rect x="1802.4" y="160.9" width="1.0" height="1.8" fill="#808080"/><rect x="1803.4" y="160.9" width="4.0" height="1.8" fill="#cccccc"/><rect x="1808.4" y="160.9" width="3.0" height="1.8" fill="#cccccc"/><rect x="1812.4" y="160.9" width="7.0" height="1.8" fill="#cccccc"/><rect x="1820.4" y="160.9" width="11.0" height="1.8" fill="#cccccc"/><rect x="1831.4" y="160.9" width="2.0" height="1.8" fill="#808080"/><rect x="1833.4" y="160.9" width="2.0" height="1.8" fill="#569cd6"/><rect x="1835.4" y="160.9" width="1.0" height="1.8" fill="#808080"/><rect x="1797.4" y="162.9" width="2.0" height="1.8" fill="#808080"/><rect x="1799.4" y="162.9" width="2.0" height="1.8" fill="#569cd6"/><rect x="1801.4" y="162.9" width="1.0" height="1.8" fill="#808080"/><rect x="1795.4" y="164.9" width="2.0" height="1.8" fill="#808080"/><rect x="1797.4" y="164.9" width="3.0" height="1.8" fill="#569cd6"/><rect x="1800.4" y="164.9" width="1.0" height="1.8" fill="#808080"/><rect x="1795.4" y="168.9" width="1.0" height="1.8" fill="#808080"/><rect x="1796.4" y="168.9" width="6.0" height="1.8" fill="#569cd6"/><rect x="1802.4" y="168.9" width="1.0" height="1.8" fill="#808080"/><rect x="1797.4" y="170.9" width="1.0" height="1.8" fill="#808080"/><rect x="1798.4" y="170.9" width="1.0" height="1.8" fill="#569cd6"/><rect x="1799.4" y="170.9" width="1.0" height="1.8" fill="#808080"/><rect x="1800.4" y="170.9" width="9.0" height="1.8" fill="#cccccc"/><rect x="1810.4" y="170.9" width="4.0" height="1.8" fill="#cccccc"/><rect x="1815.4" y="170.9" width="4.0" height="1.8" fill="#cccccc"/><rect x="1820.4" y="170.9" width="6.0" height="1.8" fill="#cccccc"/><rect x="1827.4" y="170.9" width="1.0" height="1.8" fill="#cccccc"/><rect x="1829.4" y="170.9" width="8.0" height="1.8" fill="#cccccc"/><rect x="1838.4" y="170.9" width="7.0" height="1.8" fill="#cccccc"/><rect x="1846.4" y="170.9" width="11.0" height="1.8" fill="#cccccc"/><rect x="1858.4" y="170.9" width="3.0" height="1.8" fill="#cccccc"/><rect x="1862.4" y="170.9" width="10.0" height="1.8" fill="#cccccc"/><rect x="1873.4" y="170.9" width="6.0" height="1.8" fill="#cccccc"/><rect x="1880.4" y="170.9" width="4.0" height="1.8" fill="#cccccc"/><rect x="1885.4" y="170.9" width="6.0" height="1.8" fill="#cccccc"/><rect x="1892.4" y="170.9" width="2.0" height="1.8" fill="#cccccc"/><rect x="1894.4" y="170.9" width="2.0" height="1.8" fill="#808080"/><rect x="1896.4" y="170.9" width="1.0" height="1.8" fill="#569cd6"/><rect x="1897.4" y="170.9" width="1.0" height="1.8" fill="#808080"/><rect x="1797.4" y="172.9" width="1.0" height="1.8" fill="#808080"/><rect x="1798.4" y="172.9" width="1.0" height="1.8" fill="#569cd6"/><rect x="1799.4" y="172.9" width="1.0" height="1.8" fill="#808080"/><rect x="1800.4" y="172.9" width="1.0" height="1.8" fill="#808080"/><rect x="1801.4" y="172.9" width="1.0" height="1.8" fill="#569cd6"/><rect x="1803.4" y="172.9" width="4.0" height="1.8" fill="#9cdcfe"/><rect x="1807.4" y="172.9" width="1.0" height="1.8" fill="#cccccc"/><rect x="1808.4" y="172.9" width="87.0" height="1.8" fill="#ce9178"/><rect x="1895.4" y="172.9" width="1.0" height="1.8" fill="#808080"/><rect x="1896.4" y="172.9" width="6.0" height="1.8" fill="#cccccc"/><rect x="1902.4" y="172.9" width="0.6" height="1.8" fill="#808080"/><rect x="1795.4" y="174.9" width="2.0" height="1.8" fill="#808080"/><rect x="1797.4" y="174.9" width="6.0" height="1.8" fill="#569cd6"/><rect x="1803.4" y="174.9" width="1.0" height="1.8" fill="#808080"/><rect x="1793.4" y="178.9" width="2.0" height="1.8" fill="#808080"/><rect x="1795.4" y="178.9" width="4.0" height="1.8" fill="#569cd6"/><rect x="1799.4" y="178.9" width="1.0" height="1.8" fill="#808080"/><rect x="1791.4" y="180.9" width="2.0" height="1.8" fill="#808080"/><rect x="1793.4" y="180.9" width="4.0" height="1.8" fill="#569cd6"/><rect x="1797.4" y="180.9" width="1.0" height="1.8" fill="#808080"/></g><rect x="1781.3" y="68" width="1.6" height="878" fill="#141414"/><rect x="1903" y="41" width="1.2" height="905" fill="#161616"/><rect x="1904" y="68.5" width="16" height="2" fill="#a0a0a0"/></svg>
<div class="ui" style="left:84.54px;top:10.24px;font-size:13.75px;font-weight:400;font-style:normal;color:#cccccc;transform:scaleX(0.8562);">EXPLORER</div>
<div class="ui" style="left:85.00px;top:46.24px;font-size:13.75px;font-weight:700;font-style:normal;color:#cccccc;transform:scaleX(1.0152);">ABIN-MATHEW-OLD</div>
<div class="abs" style="left:60px;top:343.25px;width:334px;height:27.5px;background:#37373d"></div>
<div class="abs" style="left:95px;top:123.25px;width:1px;height:275px;background:#585858"></div>
<div class="ui" style="left:101.88px;top:72.37px;font-size:16.25px;font-weight:400;font-style:normal;color:#e2c08d;transform:scaleX(1.0239);">abin-mathew</div>
<div class="ui" style="left:112.25px;top:99.87px;font-size:16.25px;font-weight:400;font-style:normal;color:#e2c08d;transform:scaleX(1.0488);">public</div>
<div class="ui" style="left:121.92px;top:127.37px;font-size:16.25px;font-weight:400;font-style:normal;color:#cccccc;transform:scaleX(0.9811);">assignments</div>
<div class="ui" style="left:132.80px;top:154.87px;font-size:16.25px;font-weight:400;font-style:normal;color:#cccccc;">week01.html</div>
<div class="ui" style="left:132.80px;top:182.37px;font-size:16.25px;font-weight:400;font-style:normal;color:#cccccc;">week02.html</div>
<div class="ui" style="left:132.80px;top:209.87px;font-size:16.25px;font-weight:400;font-style:normal;color:#cccccc;">week03.html</div>
<div class="ui" style="left:121.71px;top:237.37px;font-size:16.25px;font-weight:400;font-style:normal;color:#cccccc;transform:scaleX(0.9922);">images</div>
<div class="ui" style="left:122.70px;top:264.87px;font-size:16.25px;font-weight:400;font-style:normal;color:#cccccc;transform:scaleX(0.9903);">404.html</div>
<div class="ui" style="left:121.65px;top:292.37px;font-size:16.25px;font-weight:400;font-style:normal;color:#e2c08d;transform:scaleX(1.0459);">about.html</div>
<div class="ui" style="left:123.30px;top:319.87px;font-size:16.25px;font-weight:400;font-style:normal;color:#cccccc;transform:scaleX(1.0347);">final-project.html</div>
<div class="ui" style="left:122.27px;top:347.37px;font-size:16.25px;font-weight:400;font-style:normal;color:#cccccc;transform:scaleX(1.0250);">index.html</div>
<div class="ui" style="left:121.56px;top:374.87px;font-size:16.25px;font-weight:400;font-style:normal;color:#cccccc;transform:scaleX(0.9361);">style.css</div>
<div class="ui" style="left:111.79px;top:402.37px;font-size:16.25px;font-weight:400;font-style:normal;color:#cccccc;transform:scaleX(1.0146);">.gitlab-ci.yml</div>
<div class="ui" style="left:112.57px;top:429.87px;font-size:16.25px;font-weight:400;font-style:normal;color:#cccccc;transform:scaleX(0.9253);">README.md</div>
<div class="ui" style="left:360.13px;top:291.27px;font-size:16.25px;font-weight:700;font-style:normal;color:#c4ad84;transform:scaleX(1.0667);">M</div>
<div class="abs" style="left:60px;top:891px;width:334px;height:1px;background:#2b2b2b"></div>
<div class="abs" style="left:60px;top:918px;width:334px;height:1px;background:#2b2b2b"></div>
<div class="ui" style="left:85.30px;top:896.24px;font-size:13.75px;font-weight:700;font-style:normal;color:#cccccc;transform:scaleX(0.9617);">OUTLINE</div>
<div class="ui" style="left:85.30px;top:924.24px;font-size:13.75px;font-weight:700;font-style:normal;color:#cccccc;transform:scaleX(0.9688);">TIMELINE</div>
<div class="abs" style="left:568px;top:0;width:150.5px;height:41px;background:#1f1f1f;border-left:1px solid #2b2b2b;border-right:1px solid #2b2b2b"></div>
<div class="ui" style="left:433.95px;top:9.17px;font-size:16.25px;font-weight:400;font-style:normal;color:#e2c08d;transform:scaleX(1.0473);">about.html</div>
<div class="ui" style="left:518.96px;top:9.17px;font-size:16.25px;font-weight:700;font-style:normal;color:#c4ad84;transform:scaleX(1.0417);">M</div>
<div class="ui" style="left:609.20px;top:8.77px;font-size:16.25px;font-weight:400;font-style:italic;color:#ffffff;transform:scaleX(0.9747);">index.html</div>
<div class="ui" style="left:414.58px;top:45.27px;font-size:16.25px;font-weight:400;font-style:normal;color:#a9a9a9;transform:scaleX(1.0207);">abin-mathew</div>
<div class="ui" style="left:529.69px;top:45.27px;font-size:16.25px;font-weight:400;font-style:normal;color:#a9a9a9;transform:scaleX(1.0146);">public</div>
<div class="ui" style="left:620.98px;top:45.27px;font-size:16.25px;font-weight:400;font-style:normal;color:#a9a9a9;transform:scaleX(1.0194);">index.html</div>
<div class="abs" style="left:0;top:946px;width:43.1px;height:27.4px;background:#0078d4"></div>
<div class="ui" style="left:70.76px;top:949.60px;font-size:15px;font-weight:400;font-style:normal;color:#cccccc;transform:scaleX(1.0405);">main*</div>
<div class="ui" style="left:174.90px;top:949.60px;font-size:15px;font-weight:400;font-style:normal;color:#cccccc;transform:scaleX(0.9125);">0</div>
<div class="ui" style="left:208.75px;top:949.60px;font-size:15px;font-weight:400;font-style:normal;color:#cccccc;transform:scaleX(0.9125);">0</div>
<div class="ui" style="left:1430.73px;top:949.60px;font-size:15px;font-weight:400;font-style:normal;color:#cccccc;transform:scaleX(0.9718);">Ln 1, Col 1</div>
<div class="ui" style="left:1520.07px;top:949.60px;font-size:15px;font-weight:400;font-style:normal;color:#cccccc;transform:scaleX(0.9308);">Spaces: 2</div>
<div class="ui" style="left:1601.35px;top:949.60px;font-size:15px;font-weight:400;font-style:normal;color:#cccccc;transform:scaleX(0.9537);">UTF-8</div>
<div class="ui" style="left:1660.85px;top:949.60px;font-size:15px;font-weight:400;font-style:normal;color:#cccccc;transform:scaleX(0.8500);">CRLF</div>
<div class="ui" style="left:1736.24px;top:949.60px;font-size:15px;font-weight:400;font-style:normal;color:#cccccc;transform:scaleX(0.9575);">HTML</div>
<div class="ui" style="left:1813.51px;top:949.60px;font-size:15px;font-weight:400;font-style:normal;color:#cccccc;transform:scaleX(0.9900);">Go Live</div>
<svg class="abs" style="left:0;top:0" width="1920" height="983" viewBox="0 0 1920 983"><rect x="0" y="0" width="2.5" height="57" fill="#0078d4"/>
<path d="M24.5 21 H17.6 V40.3 H33.3 V34.5" fill="none" stroke="#d7d7d7" stroke-width="2.1" stroke-linejoin="round"/>
<path d="M25.4 13.4 H36 L41.6 19 V33.2 H25.4 Z" fill="none" stroke="#d7d7d7" stroke-width="2.1" stroke-linejoin="round"/>
<path d="M36 13.4 L41.6 19 L36 19 Z" fill="#d7d7d7"/>
<circle cx="34.2" cy="82.3" r="9.3" fill="none" stroke="#868686" stroke-width="2"/>
<path d="M27.4 89.2 L18.2 99.9" stroke="#868686" stroke-width="2.2" stroke-linecap="round"/>
<circle cx="23.5" cy="136.2" r="3.7" fill="none" stroke="#868686" stroke-width="1.7"/>
<circle cx="36.6" cy="141.7" r="3.7" fill="none" stroke="#868686" stroke-width="1.7"/>
<circle cx="23.5" cy="157.2" r="3.7" fill="none" stroke="#868686" stroke-width="1.7"/>
<path d="M23.5 140 V153.4 M23.5 150 H30 Q34.5 150 36 145.3" fill="none" stroke="#868686" stroke-width="1.7"/>
<circle cx="40" cy="156.6" r="10.4" fill="#0078d4" stroke="#181818" stroke-width="1.4"/>
<path d="M38.7 154 L40.4 152.9 V160.7" fill="none" stroke="#fff" stroke-width="1.5"/>
<path d="M25.3 204.5 V192.5 L44.8 204.7 L32.5 212.3" fill="none" stroke="#868686" stroke-width="1.9" stroke-linejoin="round"/>
<ellipse cx="22.9" cy="215.3" rx="4.8" ry="6.3" fill="none" stroke="#868686" stroke-width="1.8"/>
<path d="M18.3 212.5 H27.5 M16 210.2 L18.6 212 M29.8 210.2 L27.2 212 M15.4 215.5 H18 M27.8 215.5 H30.4 M16 220.8 L18.6 219 M29.8 220.8 L27.2 219" stroke="#868686" stroke-width="1.6"/>
<path d="M16.7 259 H27.6 V270.4 H38.4 V281 H16.7 Z M16.7 270.4 H27.6 V281" fill="none" stroke="#868686" stroke-width="1.9" stroke-linejoin="round"/>
<rect x="33.6" y="252.8" width="10.4" height="11" rx="1" fill="none" stroke="#868686" stroke-width="1.9"/>
<path d="M30 318.2 C37.8 318.2 42.7 322.3 42.7 328 C42.7 334 36 340.5 30 342 C24 340.5 17.3 334 17.3 328 C17.3 322.3 22.2 318.2 30 318.2 Z" fill="#868686"/>
<path d="M24.3 319.2 L23.4 314 M35.7 319.2 L36.6 314" stroke="#868686" stroke-width="1.4"/>
<circle cx="23.3" cy="313.4" r="1.8" fill="#868686"/><circle cx="36.7" cy="313.4" r="1.8" fill="#868686"/>
<ellipse cx="24.2" cy="328.4" rx="4.6" ry="3.7" transform="rotate(28 24.2 328.4)" fill="#1a1a1a"/>
<ellipse cx="35.8" cy="328.4" rx="4.6" ry="3.7" transform="rotate(-28 35.8 328.4)" fill="#1a1a1a"/>
<circle cx="24.8" cy="329.2" r="1.1" fill="#bdbdbd"/><circle cx="35.2" cy="329.2" r="1.1" fill="#bdbdbd"/>
<circle cx="29.9" cy="855.5" r="13.8" fill="none" stroke="#868686" stroke-width="1.9"/>
<circle cx="29.9" cy="851.8" r="5.6" fill="none" stroke="#868686" stroke-width="1.9"/>
<path d="M21 865.6 C22.5 861 26 858.8 29.9 858.8 C33.8 858.8 37.3 861 38.8 865.6" fill="none" stroke="#868686" stroke-width="1.9"/>
<path d="M27.17 906.60 L28.59 902.26 L31.21 902.26 L32.63 906.60 L34.33 907.31 L38.40 905.24 L40.26 907.10 L38.19 911.17 L38.90 912.87 L43.24 914.29 L43.24 916.91 L38.90 918.33 L38.19 920.03 L40.26 924.10 L38.40 925.96 L34.33 923.89 L32.63 924.60 L31.21 928.94 L28.59 928.94 L27.17 924.60 L25.47 923.89 L21.40 925.96 L19.54 924.10 L21.61 920.03 L20.90 918.33 L16.56 916.91 L16.56 914.29 L20.90 912.87 L21.61 911.17 L19.54 907.10 L21.40 905.24 L25.47 907.31 Z" fill="none" stroke="#868686" stroke-width="1.9" stroke-linejoin="round"/>
<circle cx="29.9" cy="915.6" r="3.4" fill="none" stroke="#868686" stroke-width="1.9"/>
<circle cx="40.1" cy="926" r="10.1" fill="#0078d4" stroke="#181818" stroke-width="1.4"/>
<path d="M38.8 923.2 L40.5 922.1 V929.6" fill="none" stroke="#fff" stroke-width="1.5"/>
<circle cx="360.1" cy="19.2" r="1.3" fill="#cccccc"/>
<circle cx="366.4" cy="19.2" r="1.3" fill="#cccccc"/>
<circle cx="372.8" cy="19.2" r="1.3" fill="#cccccc"/>
<path d="M66.5 50.5 L72.5 57.5 L78.5 50.5" fill="none" stroke="#cccccc" stroke-width="1.5"/>
<path d="M83.0 78.7 L88.75 85.5 L94.5 78.7" fill="none" stroke="#cccccc" stroke-width="1.5"/>
<path d="M93.0 106.2 L98.75 113.0 L104.5 106.2" fill="none" stroke="#cccccc" stroke-width="1.5"/>
<path d="M103.4 133.7 L109.15 140.5 L114.9 133.7" fill="none" stroke="#cccccc" stroke-width="1.5"/>
<path d="M115.72 159.7 L111.75 164.50 L115.72 169.3" fill="none" stroke="#e37933" stroke-width="2.1"/><path d="M118.88 159.7 L122.85 164.50 L118.88 169.3" fill="none" stroke="#e37933" stroke-width="2.1"/>
<path d="M115.72 187.2 L111.75 192.00 L115.72 196.8" fill="none" stroke="#e37933" stroke-width="2.1"/><path d="M118.88 187.2 L122.85 192.00 L118.88 196.8" fill="none" stroke="#e37933" stroke-width="2.1"/>
<path d="M115.72 214.7 L111.75 219.50 L115.72 224.3" fill="none" stroke="#e37933" stroke-width="2.1"/><path d="M118.88 214.7 L122.85 219.50 L118.88 224.3" fill="none" stroke="#e37933" stroke-width="2.1"/>
<path d="M105.7 241.2 L112.9 247.0 L105.7 252.8" fill="none" stroke="#cccccc" stroke-width="1.5"/>
<path d="M105.62 269.7 L101.65 274.50 L105.62 279.3" fill="none" stroke="#e37933" stroke-width="2.1"/><path d="M108.78 269.7 L112.75 274.50 L108.78 279.3" fill="none" stroke="#e37933" stroke-width="2.1"/>
<path d="M105.62 297.2 L101.65 302.00 L105.62 306.8" fill="none" stroke="#e37933" stroke-width="2.1"/><path d="M108.78 297.2 L112.75 302.00 L108.78 306.8" fill="none" stroke="#e37933" stroke-width="2.1"/>
<path d="M105.62 324.7 L101.65 329.50 L105.62 334.3" fill="none" stroke="#e37933" stroke-width="2.1"/><path d="M108.78 324.7 L112.75 329.50 L108.78 334.3" fill="none" stroke="#e37933" stroke-width="2.1"/>
<path d="M105.62 352.2 L101.65 357.00 L105.62 361.8" fill="none" stroke="#e37933" stroke-width="2.1"/><path d="M108.78 352.2 L112.75 357.00 L108.78 361.8" fill="none" stroke="#e37933" stroke-width="2.1"/>
<path d="M104.60000000000001 378.8 L103.0 389.7 M110.0 378.8 L108.4 389.7 M101.0 382.6 H112.80000000000001 M100.5 386.3 H112.30000000000001" fill="none" stroke="#519aba" stroke-width="2.1"/>
<path d="M89.8 409.5 L92.39999999999999 403.5 L94.39999999999999 409.2 H99.39999999999999 L101.39999999999999 403.5 L104.0 409.5 L103.39999999999999 414.0 L96.89999999999999 418.9 L90.39999999999999 414.0 Z" fill="#e8743b"/>
<circle cx="96.7" cy="439.2" r="6.8" fill="none" stroke="#519aba" stroke-width="1.5"/>
<circle cx="96.7" cy="435.3" r="1.1" fill="#519aba"/>
<path d="M95.2 437.9 H97.0 V443.1 M95.0 443.1 H98.80000000000001" fill="none" stroke="#519aba" stroke-width="1.4"/>
<circle cx="367.1" cy="81" r="4.3" fill="#8b7f60"/>
<circle cx="367.1" cy="108.8" r="4.3" fill="#8b7f60"/>
<path d="M69.6 899 L76.3 905.0 L69.6 911" fill="none" stroke="#cccccc" stroke-width="1.5"/>
<path d="M69.6 926.5 L76.3 932.5 L69.6 938.5" fill="none" stroke="#cccccc" stroke-width="1.5"/>
<path d="M417.63 13.8 L413.55 18.30 L417.63 22.8" fill="none" stroke="#e37933" stroke-width="2.1"/><path d="M420.87 13.8 L424.95 18.30 L420.87 22.8" fill="none" stroke="#e37933" stroke-width="2.1"/>
<path d="M591.87 14 L587.75 18.50 L591.87 23" fill="none" stroke="#e37933" stroke-width="2.1"/><path d="M595.13 14 L599.25 18.50 L595.13 23" fill="none" stroke="#e37933" stroke-width="2.1"/>
<path d="M695.5 13.5 L705.5 23.5 M705.5 13.5 L695.5 23.5" stroke="#e8e8e8" stroke-width="1.6"/>
<rect x="1852.1" y="10.9" width="14.9" height="15" rx="1.8" fill="none" stroke="#cccccc" stroke-width="1.7"/>
<path d="M1859.5 10.9 V25.9" stroke="#cccccc" stroke-width="1.5"/>
<circle cx="1885.5" cy="19" r="1.3" fill="#cccccc"/>
<circle cx="1891.5" cy="19" r="1.3" fill="#cccccc"/>
<circle cx="1897.5" cy="19" r="1.3" fill="#cccccc"/>
<path d="M517 48.2 L523.3 54.2 L517 60.2" fill="none" stroke="#a9a9a9" stroke-width="1.4"/>
<path d="M579.8 48.2 L586 54.2 L579.8 60.2" fill="none" stroke="#a9a9a9" stroke-width="1.4"/>
<path d="M603.40 50.5 L599.05 55.00 L603.40 59.5" fill="none" stroke="#e37933" stroke-width="2.1"/><path d="M606.80 50.5 L611.15 55.00 L606.80 59.5" fill="none" stroke="#e37933" stroke-width="2.1"/>
<path d="M703 48.2 L709.3 54.2 L703 60.2" fill="none" stroke="#a9a9a9" stroke-width="1.4"/>
<rect x="716.8" y="58.6" width="2" height="2" fill="#a9a9a9"/>
<rect x="720.6" y="58.6" width="2" height="2" fill="#a9a9a9"/>
<rect x="724.4" y="58.6" width="2" height="2" fill="#a9a9a9"/>
<path d="M16.2 955.9 L21.3 960.8 L16.2 965.6 M27 951.3 L22.1 956.1 L27 961" fill="none" stroke="#ffffff" stroke-width="1.5"/>
<circle cx="55.3" cy="952.7" r="2.2" fill="none" stroke="#cccccc" stroke-width="1.5"/>
<circle cx="55.3" cy="966" r="2.2" fill="none" stroke="#cccccc" stroke-width="1.5"/>
<circle cx="63.3" cy="955.5" r="2.2" fill="none" stroke="#cccccc" stroke-width="1.5"/>
<path d="M55.3 955 V963.8 M55.3 962 C55.3 959 63.3 961 63.3 957.7" fill="none" stroke="#cccccc" stroke-width="1.5"/>
<path d="M120.3 961.2 A7 7 0 0 1 133.2 955.2" fill="none" stroke="#cccccc" stroke-width="1.5"/>
<path d="M133.7 956.6 A7 7 0 0 1 120.8 962.6" fill="none" stroke="#cccccc" stroke-width="1.5"/>
<path d="M129.8 956.2 L134.6 957.3 L135.6 952.5" fill="none" stroke="#cccccc" stroke-width="1.5"/>
<path d="M124.2 961.6 L119.4 960.5 L118.4 965.3" fill="none" stroke="#cccccc" stroke-width="1.5"/>
<circle cx="162.1" cy="958.9" r="7.3" fill="none" stroke="#cccccc" stroke-width="1.5"/>
<path d="M158.8 955.6 L165.4 962.2 M165.4 955.6 L158.8 962.2" stroke="#cccccc" stroke-width="1.5"/>
<path d="M196 951.5 L203.5 966 H188.5 Z" fill="none" stroke="#cccccc" stroke-width="1.5" stroke-linejoin="round"/>
<path d="M196 956 V961.5 M196 963 V964.5" stroke="#cccccc" stroke-width="1.5"/>
<path d="M1717.2 952.8 Q1714.8 952.8 1714.8 955 V957.6 Q1714.8 959.2 1713.6 959.2 Q1714.8 959.2 1714.8 960.8 V963.4 Q1714.8 965.6 1717.2 965.6 M1724.3 952.8 Q1726.7 952.8 1726.7 955 V957.6 Q1726.7 959.2 1727.9 959.2 Q1726.7 959.2 1726.7 960.8 V963.4 Q1726.7 965.6 1724.3 965.6" fill="none" stroke="#cccccc" stroke-width="1.3"/>
<circle cx="1802.3" cy="957.3" r="1.4" fill="#cccccc"/>
<path d="M1799.3 960.2 A4 4 0 1 1 1805.3 960.2 M1797.6 962.4 A6.6 6.6 0 1 1 1807 962.4" fill="none" stroke="#cccccc" stroke-width="1.4"/>
<path d="M1802.3 959.5 V966.8" stroke="#cccccc" stroke-width="2"/>
<path d="M1886.8 963.8 H1899.4 L1897.9 961.3 V957.2 A4.6 4.6 0 0 0 1888.3 957.2 V961.3 Z M1891.2 965.6 A2.1 2.1 0 0 0 1895 965.6" fill="none" stroke="#cccccc" stroke-width="1.4" stroke-linejoin="round"/>
<rect x="1888.5" y="118" width="31.5" height="162" fill="#1c1c1c"/>
<path d="M1893.2 137.2 L1895.2 134.6 C1893.8 131 1895.8 127 1899.6 126.9 C1903.4 126.8 1904.2 130.5 1902.6 133.6 C1901 136.2 1897.6 136.8 1895.6 135.8 Z" fill="#f0f0f0"/>
<path d="M1897.2 131.2 C1896.6 133.4 1898.6 134.6 1900.4 133.6" fill="none" stroke="#1c1c1c" stroke-width="1.1"/>
<circle cx="1900.6" cy="129.8" r="1" fill="#1c1c1c"/>
<rect x="1906.7" y="130.9" width="2.5" height="2.5" fill="#ffffff"/>
<rect x="1910.6" y="130.9" width="2.5" height="2.5" fill="#ffffff"/>
<rect x="1914.5" y="130.9" width="2.5" height="2.5" fill="#ffffff"/>
<path d="M1892 150.3 H1898.8 L1900.2 147.7 H1907.8 L1909.2 150.3 H1917 V166.2 H1892 Z" fill="#ffffff"/>
<circle cx="1904.4" cy="158.5" r="4.2" fill="none" stroke="#1c1c1c" stroke-width="1.3"/>
<circle cx="1912.7" cy="154.1" r="0.8" fill="#1c1c1c"/>
<path d="M1892 183 H1910 V188.8 L1917 183.6 V198.4 L1910 193.2 V198.8 H1892 Z" fill="#ffffff"/>
<path d="M1892 214 H1913 V216.5 H1894.5 V232 H1892 Z" fill="#ffffff"/>
<rect x="1896" y="218" width="21" height="16" fill="#ffffff"/>
<path d="M1900.78 250.50 L1902.71 246.90 L1905.89 246.90 L1907.82 250.50 L1909.90 251.70 L1913.98 251.57 L1915.57 254.33 L1913.42 257.80 L1913.42 260.20 L1915.57 263.67 L1913.98 266.43 L1909.90 266.30 L1907.82 267.50 L1905.89 271.10 L1902.71 271.10 L1900.78 267.50 L1898.70 266.30 L1894.62 266.43 L1893.03 263.67 L1895.18 260.20 L1895.18 257.80 L1893.03 254.33 L1894.62 251.57 L1898.70 251.70 Z" fill="#ffffff" stroke="#ffffff" stroke-width="1" stroke-linejoin="round"/>
<circle cx="1904.3" cy="259" r="3.9" fill="#1c1c1c"/>
<rect x="509.6" y="576" width="1293.2" height="264.4" fill="none" stroke="#e3150f" stroke-width="4.0"/>
<rect x="0" y="973.4" width="1920" height="1.3" fill="#84424a"/>
<circle cx="48" cy="988" r="8" fill="#e89aa6"/>
<rect x="1243" y="977" width="48" height="10" rx="3" fill="#8a3f47"/>
<rect x="1265" y="981" width="22" height="6" rx="1" fill="#f0c0c8"/>
<rect x="1670" y="977" width="44" height="10" rx="3" fill="#8a3f47"/></svg>
</body></html>
